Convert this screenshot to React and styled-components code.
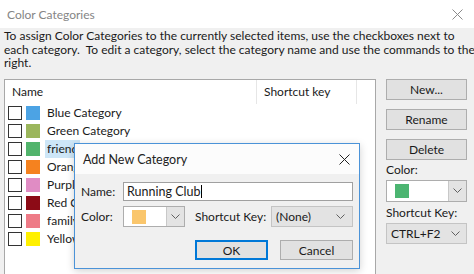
import React from 'react';
import styled, { createGlobalStyle } from 'styled-components';

const GlobalStyle = createGlobalStyle`
  html, body {
    margin: 0;
    padding: 0;
    background: #f0f0f0;
  }
  body {
    width: 474px;
    height: 274px;
    overflow: hidden;
    font-family: Lato, "Noto Sans", sans-serif;
    font-size: 12px;
    color: #1a1a1a;
  }
`;

const categories = [
  { name: 'Blue Category', color: '#4ca3e4' },
  { name: 'Green Category', color: '#9bb65c' },
  { name: 'friend', color: '#52b46c', selected: true },
  { name: 'Orange Category', color: '#f5821f' },
  { name: 'Purple Category', color: '#e08cc4' },
  { name: 'Red Category', color: '#8c0b16' },
  { name: 'family', color: '#ee7b87' },
  { name: 'Yellow Category', color: '#fff000' },
];

const Chevron = () => (
  <svg width="9" height="5" viewBox="0 0 9 5">
    <path d="M0.5 0.5 L4.5 4.5 L8.5 0.5" fill="none" stroke="#606060" strokeWidth="1" />
  </svg>
);

const CloseIcon = ({ color }) => (
  <svg width="11" height="11" viewBox="0 0 11 11">
    <path d="M0.5 0.5 L10.5 10.5 M10.5 0.5 L0.5 10.5" stroke={color} strokeWidth="1" />
  </svg>
);

const App = () => (
  <Window>
    <GlobalStyle />
    <TitleBar>
      <span>Color Categories</span>
      <CloseIcon color="#8a8a8a" />
    </TitleBar>
    <Description>
      To assign Color Categories to the currently selected items, use the checkboxes next to
      <br />
      each category.&nbsp; To edit a category, select the category name and use the commands to the
      <br />
      right.
    </Description>
    <Main>
      <ListBox>
        <ListHeader>
          <HeaderCell $width={252}>Name</HeaderCell>
          <HeaderCell $width={100}>Shortcut key</HeaderCell>
        </ListHeader>
        {categories.map((c) => (
          <Row key={c.name}>
            <CheckBox />
            <Swatch $color={c.color} />
            <RowLabel $selected={c.selected}>{c.name}</RowLabel>
          </Row>
        ))}
      </ListBox>
      <SideColumn>
        <SideButton>New...</SideButton>
        <SideButton>Rename</SideButton>
        <SideButton>Delete</SideButton>
        <SideLabel>Color:</SideLabel>
        <ColorCombo>
          <ComboValue>
            <Swatch $color="#4cb571" />
          </ComboValue>
          <DropButton>
            <Chevron />
          </DropButton>
        </ColorCombo>
        <SideLabel>Shortcut Key:</SideLabel>
        <Select>
          <span>CTRL+F2</span>
          <Chevron />
        </Select>
      </SideColumn>
    </Main>

    <Dialog>
      <DialogTitle>
        <span>Add New Category</span>
        <CloseIcon color="#222" />
      </DialogTitle>
      <DialogBody>
        <FieldRow>
          <FieldLabel>Name:</FieldLabel>
          <TextInput>
            Running Club<Caret />
          </TextInput>
        </FieldRow>
        <FieldRow>
          <FieldLabel>Color:</FieldLabel>
          <DialogColorCombo>
            <ComboValue>
              <Swatch $color="#fac66c" />
            </ComboValue>
            <DropButton>
              <Chevron />
            </DropButton>
          </DialogColorCombo>
          <InlineLabel>Shortcut Key:</InlineLabel>
          <DialogSelect>
            <span>(None)</span>
            <Chevron />
          </DialogSelect>
        </FieldRow>
        <ButtonRow>
          <DialogButton $default>OK</DialogButton>
          <DialogButton>Cancel</DialogButton>
        </ButtonRow>
      </DialogBody>
    </Dialog>
  </Window>
);

const Window = styled.div`
  position: relative;
  display: flex;
  flex-direction: column;
  width: 474px;
`;

const TitleBar = styled.div`
  display: flex;
  align-items: center;
  justify-content: space-between;
  height: 28px;
  padding: 0 11px 0 7px;
  background: #fff;
  color: #858585;
  font-size: 12px;
  box-sizing: border-box;
`;

const Description = styled.p`
  margin: 0;
  padding: 1px 4px 0;
  line-height: 13.5px;
  white-space: nowrap;
`;

const Main = styled.div`
  display: flex;
  gap: 10px;
  margin-top: 9px;
  padding-left: 4px;
`;

const ListBox = styled.div`
  width: 372px;
  height: 220px;
  box-sizing: border-box;
  background: #fff;
  border: 1px solid #a8a8a8;
`;

const ListHeader = styled.div`
  display: flex;
  height: 24px;
`;

const HeaderCell = styled.div`
  width: ${(p) => p.$width}px;
  padding-left: 7px;
  display: flex;
  align-items: center;
  border-right: 1px solid #e6e6e6;
  box-sizing: border-box;
`;

const Row = styled.div`
  display: flex;
  align-items: center;
  height: 18px;
  padding-left: 3px;
`;

const CheckBox = styled.span`
  width: 12px;
  height: 12px;
  border: 1px solid #333;
  background: #fff;
  margin-right: 4px;
`;

const Swatch = styled.span`
  display: block;
  width: 14px;
  height: 14px;
  background: ${(p) => p.$color};
`;

const RowLabel = styled.span`
  margin-left: 5px;
  padding: 0 2px;
  line-height: 18px;
  background: ${(p) => (p.$selected ? '#cde6f7' : 'transparent')};
`;

const SideColumn = styled.div`
  display: flex;
  flex-direction: column;
  width: 81px;
`;

const SideButton = styled.div`
  height: 21px;
  margin-bottom: 9px;
  display: flex;
  align-items: center;
  justify-content: center;
  background: #e1e1e1;
  border: 1px solid #adadad;
  box-sizing: border-box;
`;

const SideLabel = styled.div`
  line-height: 14px;
  margin: -6px 0 3px;
`;

const ColorCombo = styled.div`
  display: flex;
  height: 22px;
  margin-bottom: 10px;
  border: 1px solid #adadad;
  background: #fff;
  box-sizing: border-box;
`;

const ComboValue = styled.div`
  flex: 1;
  display: flex;
  align-items: center;
  padding-left: 8px;
`;

const DropButton = styled.div`
  width: 17px;
  display: flex;
  align-items: center;
  justify-content: center;
  background: #e3e3e3;
  border-left: 1px solid #c8c8c8;
`;

const Select = styled.div`
  display: flex;
  align-items: center;
  justify-content: space-between;
  height: 21px;
  padding: 0 6px 0 4px;
  background: #e3e3e3;
  border: 1px solid #c4c4c4;
  box-sizing: border-box;
`;

const Dialog = styled.div`
  position: absolute;
  left: 74px;
  top: 143px;
  width: 286px;
  height: 126px;
  box-sizing: border-box;
  background: #f0f0f0;
  border: 1px solid #4b93d8;
  box-shadow: 0 2px 8px rgba(0, 0, 0, 0.18);
  display: flex;
  flex-direction: column;
`;

const DialogTitle = styled.div`
  display: flex;
  align-items: center;
  justify-content: space-between;
  height: 30px;
  padding: 0 9px 0 8px;
  background: #fcfcfc;
  font-size: 12.5px;
  color: #222;
`;

const DialogBody = styled.div`
  display: flex;
  flex-direction: column;
  gap: 5px;
  padding: 8px 6px 0 6px;
`;

const FieldRow = styled.div`
  display: flex;
  align-items: center;
`;

const FieldLabel = styled.span`
  width: 42px;
`;

const TextInput = styled.div`
  flex: 1;
  height: 19px;
  display: flex;
  align-items: center;
  padding-left: 3px;
  background: #fff;
  border: 1px solid #a0a0a0;
  box-sizing: border-box;
  font-size: 12.5px;
`;

const Caret = styled.span`
  width: 1px;
  height: 13px;
  background: #000;
  margin-left: 1px;
`;

const DialogColorCombo = styled(ColorCombo)`
  width: 62px;
  height: 21px;
  margin-bottom: 0;
`;

const InlineLabel = styled.span`
  margin-left: 10px;
  width: 76px;
`;

const DialogSelect = styled(Select)`
  flex: 1;
  padding-right: 7px;
`;

const ButtonRow = styled.div`
  display: flex;
  justify-content: flex-end;
  gap: 12px;
  margin-top: 8px;
`;

const DialogButton = styled.div`
  width: 73px;
  height: 20px;
  display: flex;
  align-items: center;
  justify-content: center;
  box-sizing: border-box;
  background: #e1e1e1;
  border: ${(p) => (p.$default ? '2px solid #0078d7' : '1px solid #adadad')};
`;

export default App;
